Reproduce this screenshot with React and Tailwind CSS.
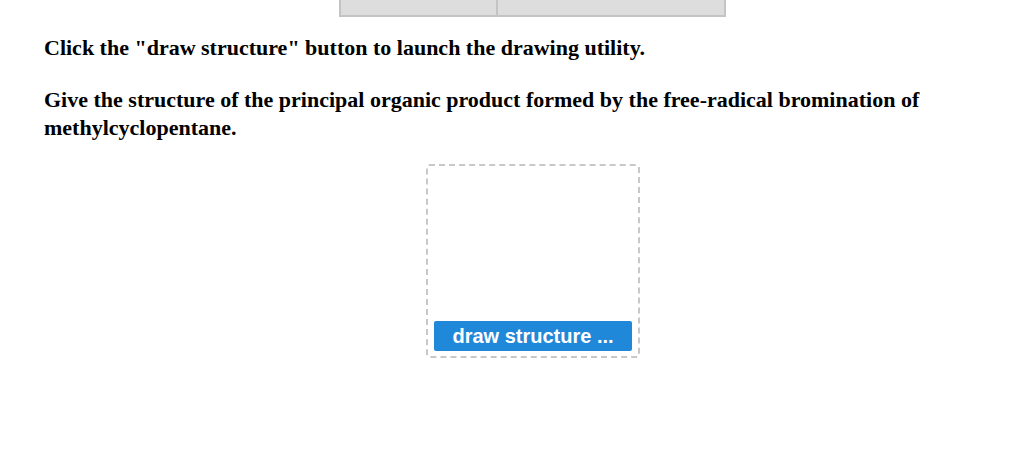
export default function App() {
  return (
    <div className="w-[1024px] h-[459px] bg-white overflow-hidden font-['Liberation_Serif',serif] text-black">
      {/* tab strip at top */}
      <div className="ml-[339px] flex w-[387px] h-[17px] bg-[#dddddd] border-x-2 border-b-2 border-[#c4c4c4]">
        <div className="w-[157px] border-r-2 border-[#c4c4c4]" />
        <div className="flex-1" />
      </div>

      <div className="pl-[44px] pr-[60px] pt-[17px] text-[22px] font-bold leading-[28px]">
        <p>Click the "draw structure" button to launch the drawing utility.</p>
        <p className="mt-[24px]">
          Give the structure of the principal organic product formed by the free-radical bromination of
          methylcyclopentane.
        </p>
      </div>

      <div className="ml-[426px] mt-[22px] w-[214px] h-[194px] border-2 border-dashed border-[#c8c8c8] rounded-[3px] flex flex-col justify-end px-[6px] pb-[5px]">
        <button className="h-[30px] w-full rounded-[2px] bg-[#1f88d9] text-white font-['Liberation_Sans',sans-serif] font-bold text-[20px] leading-none">
          draw structure ...
        </button>
      </div>
    </div>
  );
}
